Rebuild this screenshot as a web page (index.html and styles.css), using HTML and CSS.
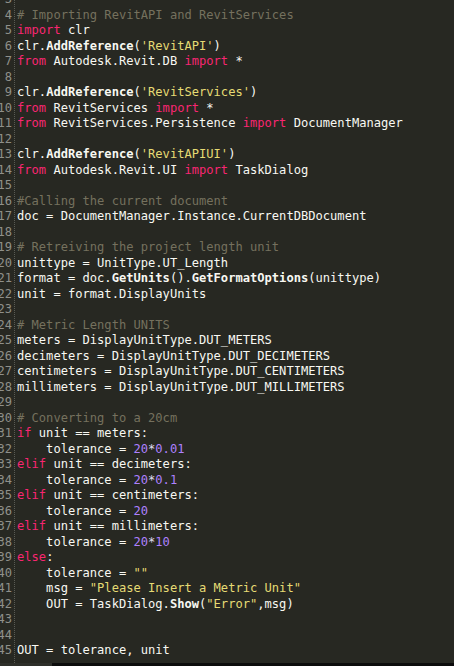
FILE: index.html
```html
<!DOCTYPE html>
<html lang="en">
<head>
    <meta charset="UTF-8">
    <meta name="viewport" content="width=device-width, initial-scale=1.0">
    <title>revit_tolerance.py</title>
    <link rel="stylesheet" href="styles.css">
</head>
<body>
    <div class="editor">
        <div class="gutter">
            <div>3</div><div>4</div><div>5</div><div>6</div><div>7</div><div>8</div><div>9</div>
            <div>10</div><div>11</div><div>12</div><div>13</div><div>14</div><div>15</div><div>16</div>
            <div>17</div><div>18</div><div>19</div><div>20</div><div>21</div><div>22</div><div>23</div>
            <div>24</div><div>25</div><div>26</div><div>27</div><div>28</div><div>29</div><div>30</div>
            <div>31</div><div>32</div><div>33</div><div>34</div><div>35</div><div>36</div><div>37</div>
            <div>38</div><div>39</div><div>40</div><div>41</div><div>42</div><div>43</div><div>44</div>
            <div>45</div>
        </div>
        <div class="code">
<div class="ln"></div>
<div class="ln"><span class="cm"># Importing RevitAPI and RevitServices</span></div>
<div class="ln"><span class="kw">import</span> clr</div>
<div class="ln">clr.<b>AddReference</b>(<span class="st">'RevitAPI'</span>)</div>
<div class="ln"><span class="kw">from</span> Autodesk.Revit.DB <span class="kw">import</span> *</div>
<div class="ln"></div>
<div class="ln">clr.<b>AddReference</b>(<span class="st">'RevitServices'</span>)</div>
<div class="ln"><span class="kw">from</span> RevitServices <span class="kw">import</span> *</div>
<div class="ln"><span class="kw">from</span> RevitServices.Persistence <span class="kw">import</span> DocumentManager</div>
<div class="ln"></div>
<div class="ln">clr.<b>AddReference</b>(<span class="st">'RevitAPIUI'</span>)</div>
<div class="ln"><span class="kw">from</span> Autodesk.Revit.UI <span class="kw">import</span> TaskDialog</div>
<div class="ln"></div>
<div class="ln"><span class="cm">#Calling the current document</span></div>
<div class="ln">doc = DocumentManager.Instance.CurrentDBDocument</div>
<div class="ln"></div>
<div class="ln"><span class="cm"># Retreiving the project length unit</span></div>
<div class="ln">unittype = UnitType.UT_Length</div>
<div class="ln">format = doc.<b>GetUnits</b>().<b>GetFormatOptions</b>(unittype)</div>
<div class="ln">unit = format.DisplayUnits</div>
<div class="ln"></div>
<div class="ln"><span class="cm"># Metric Length UNITS</span></div>
<div class="ln">meters = DisplayUnitType.DUT_METERS</div>
<div class="ln">decimeters = DisplayUnitType.DUT_DECIMETERS</div>
<div class="ln">centimeters = DisplayUnitType.DUT_CENTIMETERS</div>
<div class="ln">millimeters = DisplayUnitType.DUT_MILLIMETERS</div>
<div class="ln"></div>
<div class="ln"><span class="cm"># Converting to a 20cm</span></div>
<div class="ln"><span class="kw">if</span> unit == meters:</div>
<div class="ln">    tolerance = <span class="nu">20</span><span class="op">*</span><span class="nu">0.01</span></div>
<div class="ln"><span class="kw">elif</span> unit == decimeters:</div>
<div class="ln">    tolerance = <span class="nu">20</span><span class="op">*</span><span class="nu">0.1</span></div>
<div class="ln"><span class="kw">elif</span> unit == centimeters:</div>
<div class="ln">    tolerance = <span class="nu">20</span></div>
<div class="ln"><span class="kw">elif</span> unit == millimeters:</div>
<div class="ln">    tolerance = <span class="nu">20</span><span class="op">*</span><span class="nu">10</span></div>
<div class="ln"><span class="kw">else</span>:</div>
<div class="ln">    tolerance = <span class="st">""</span></div>
<div class="ln">    msg = <span class="st">"Please Insert a Metric Unit"</span></div>
<div class="ln">    OUT = TaskDialog.<b>Show</b>(<span class="st">"Error"</span>,msg)</div>
<div class="ln"></div>
<div class="ln"></div>
<div class="ln">OUT = tolerance, unit</div>
        </div>
    </div>
    <div class="statusbar">
        <div class="scroll-thumb"></div>
    </div>
</body>
</html>
```

FILE: styles.css
```css
html, body {
    margin: 0;
    padding: 0;
    height: 666px;
    overflow: hidden;
    background: #272822;
}

body {
    display: flex;
    flex-direction: column;
    font-family: "DejaVu Sans Mono", "Liberation Mono", monospace;
    font-size: 12.1px;
    line-height: 15.5px;
}

/* editor area (the screenshot is a crop, so line 3 is cut at the top) */
.editor {
    flex: 1;
    display: flex;
    margin-top: -8px;
    overflow: hidden;
}

.gutter {
    width: 12px;
    direction: rtl;
    text-align: right;
    color: #8f908a;
    white-space: nowrap;
    border-right: 1px dotted #5a5b54;
    margin-right: 1px;
    padding-right: 2px;
}

.code {
    flex: 1;
    padding-left: 1px;
    color: #f8f8f2;
}

.ln {
    height: 15.5px;
    white-space: pre;
}

.code b {
    font-weight: bold;
}

.kw { color: #f92672; }
.st { color: #e6db74; }
.cm { color: #75715e; }
.nu { color: #ae81ff; }
.op { color: #e0dcef; }

.statusbar {
    height: 3px;
    background: #0c0c0c;
    display: flex;
}

.scroll-thumb {
    width: 52px;
    background: #2e2f2a;
}
```
